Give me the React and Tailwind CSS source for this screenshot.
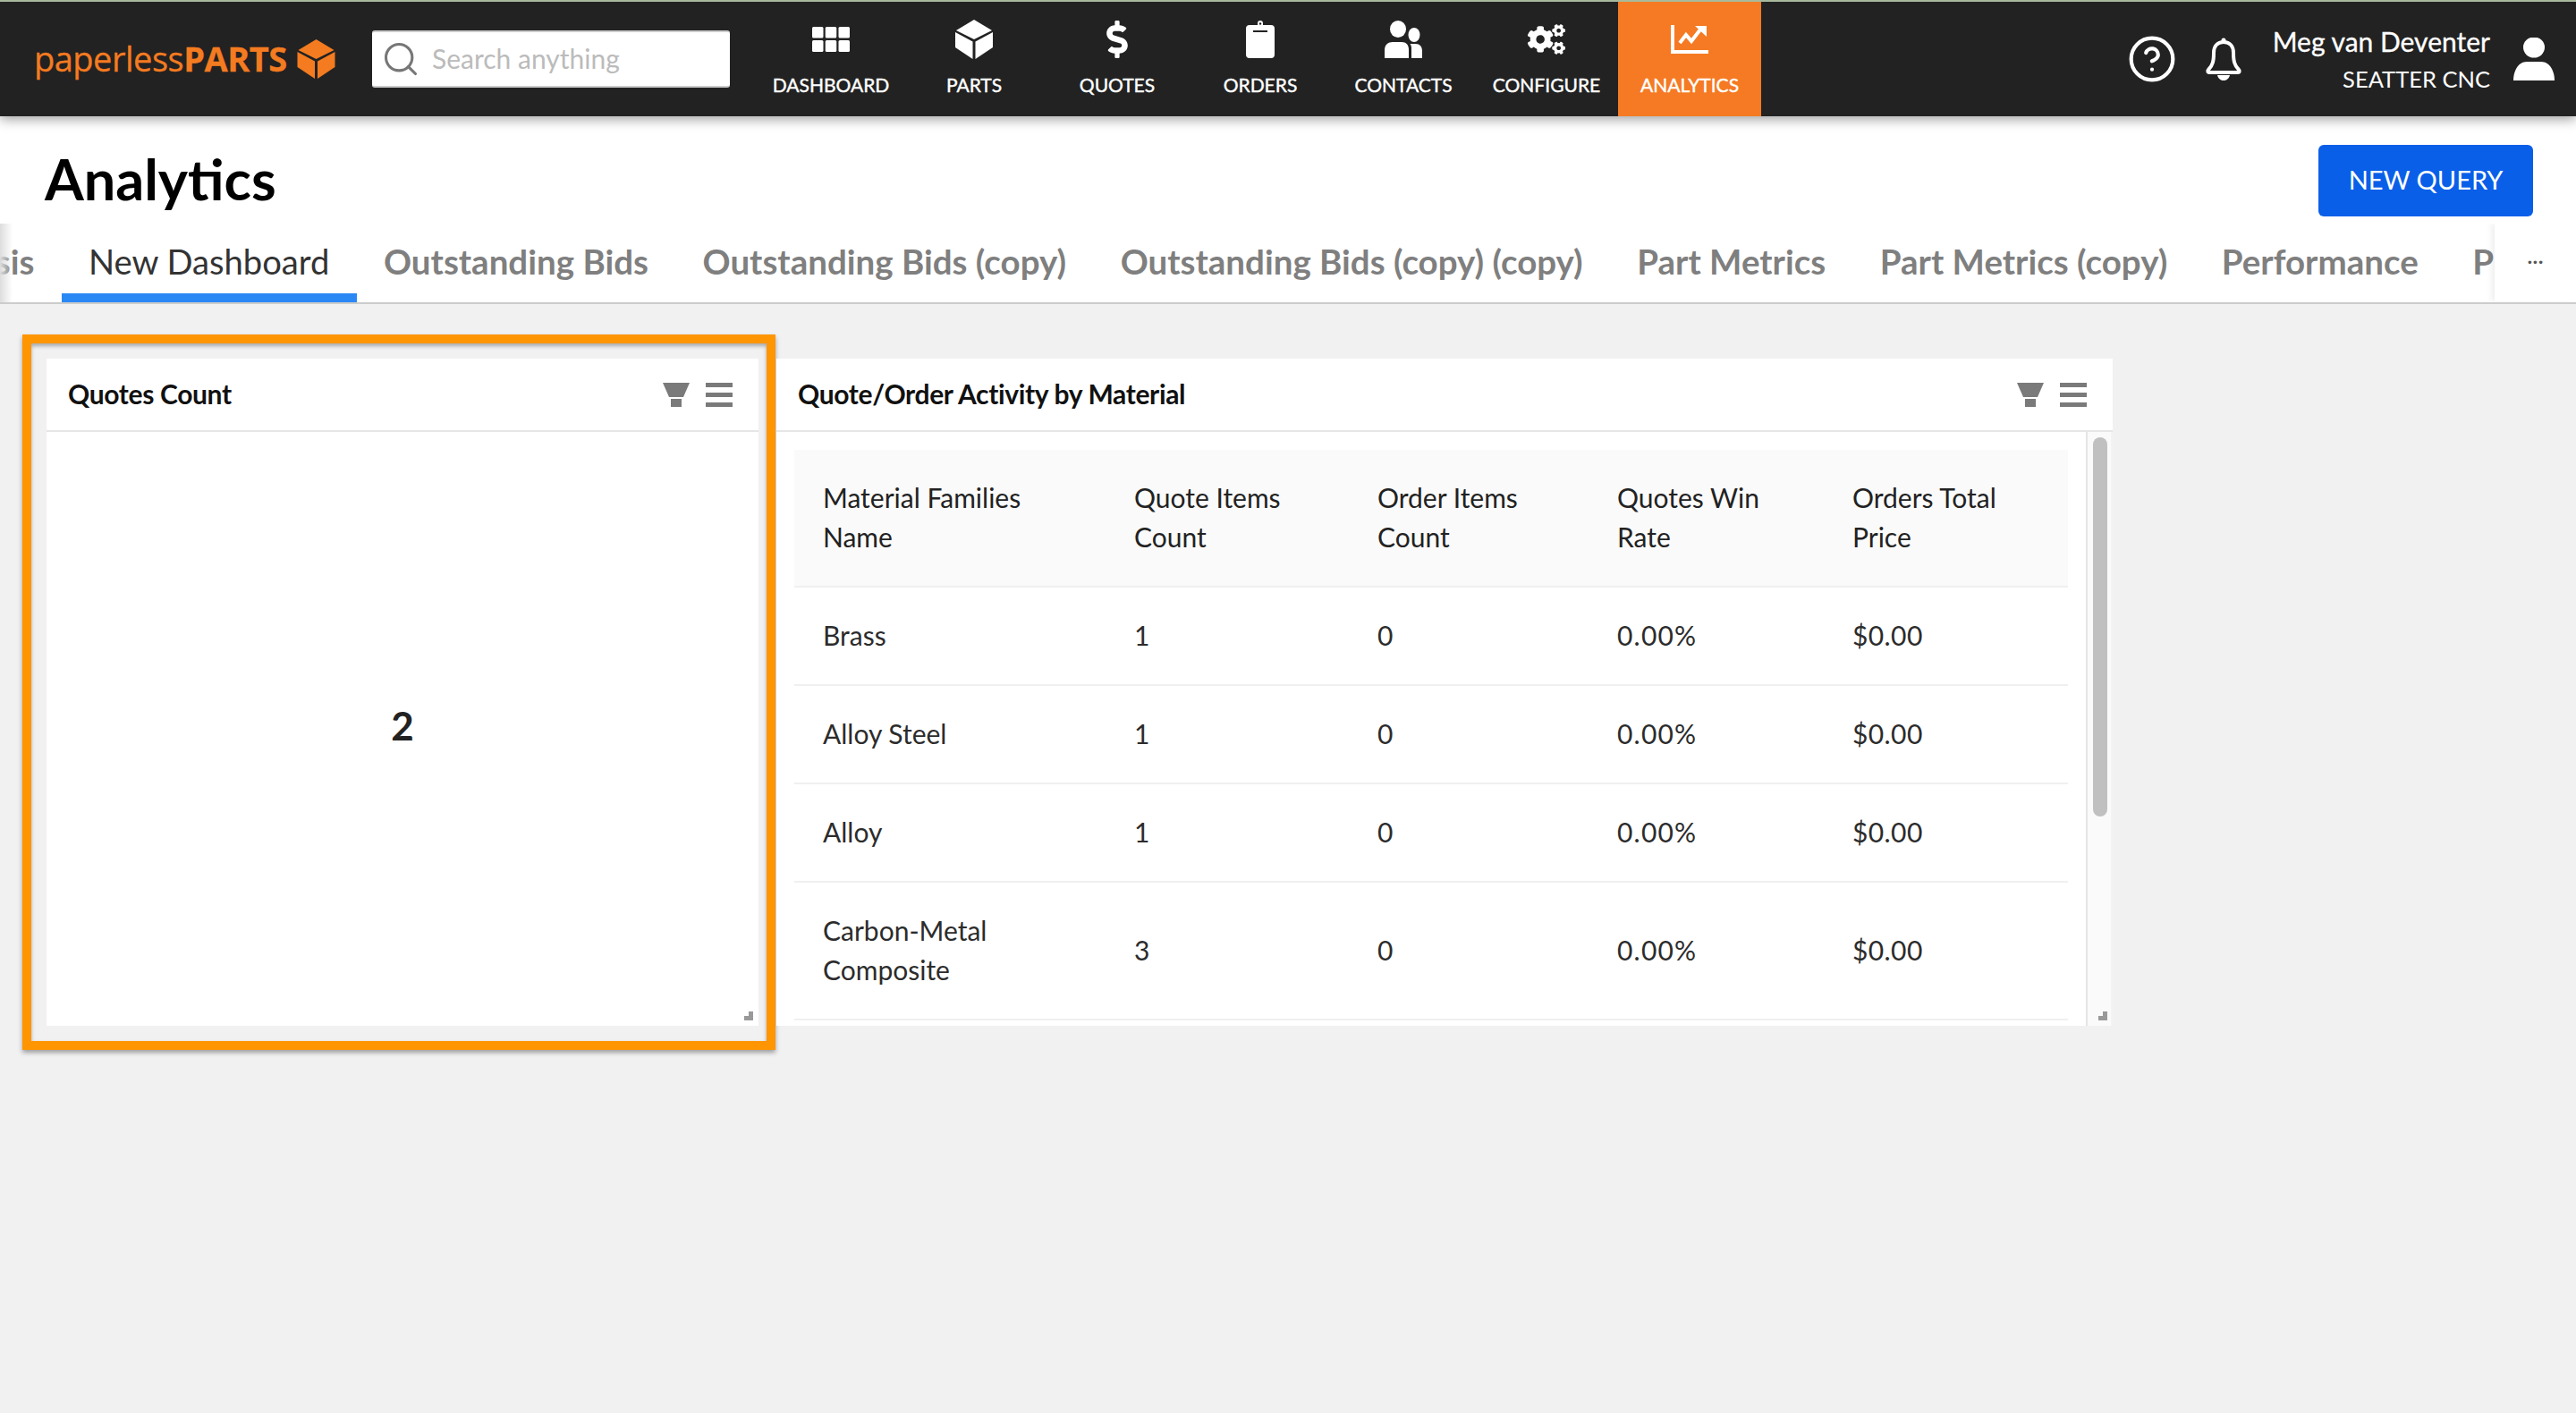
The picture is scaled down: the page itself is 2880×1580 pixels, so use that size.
import { CircleHelp, Search } from "lucide-react";
import { FaCogs, FaDollarSign } from "react-icons/fa";

const CubeIcon = ({ className }) => (
  <svg viewBox="0 0 42 44" className={className} fill="currentColor">
    <polygon points="21,0 41,12 21,22 1,12" />
    <polygon points="0,14 19.5,24.5 19.5,44 0,31" />
    <polygon points="22.5,24.5 42,14 42,31 22.5,44" />
  </svg>
);

const GridIcon = () => (
  <svg viewBox="0 0 42 28" className="h-[28px] w-[42px]" fill="currentColor">
    <rect x="0" y="0" width="12.5" height="12.5" rx="1.5" />
    <rect x="14.75" y="0" width="12.5" height="12.5" rx="1.5" />
    <rect x="29.5" y="0" width="12.5" height="12.5" rx="1.5" />
    <rect x="0" y="15" width="12.5" height="13" rx="1.5" />
    <rect x="14.75" y="15" width="12.5" height="13" rx="1.5" />
    <rect x="29.5" y="15" width="12.5" height="13" rx="1.5" />
  </svg>
);

const ClipboardIcon = () => (
  <svg viewBox="0 0 32 42" className="h-[42px] w-[32px]">
    <path
      fill="currentColor"
      d="M13 5V3a3 3 0 0 1 6 0v2h9a4 4 0 0 1 4 4v29a4 4 0 0 1-4 4H4a4 4 0 0 1-4-4V9a4 4 0 0 1 4-4z"
    />
    <rect x="8" y="11" width="16" height="2" fill="#222222" />
    <circle cx="16" cy="3.5" r="1.2" fill="#222222" />
  </svg>
);

const ContactsIcon = () => (
  <svg viewBox="0 0 42 42" className="h-[42px] w-[42px]" fill="currentColor">
    <ellipse cx="15" cy="9.5" rx="9" ry="9.5" />
    <ellipse cx="33" cy="16" rx="6.5" ry="8" />
    <path d="M0 42V33c0-6 4-9 9-9h10c5 0 8 3 8 9v9z" />
    <path d="M30 42V31c0-2-.5-4-1.500-5h6c5 0 7.500 3 7.500 8v8z" />
  </svg>
);

const ChartIcon = () => (
  <svg viewBox="0 0 42 32" className="h-[32px] w-[42px]" fill="none">
    <path d="M2 0v30h40" stroke="currentColor" strokeWidth="4" />
    <path d="M10 20l7-9 6 7 10-13" stroke="currentColor" strokeWidth="4" />
    <polygon points="27,1 40,1 40,13" fill="currentColor" />
  </svg>
);

const BellIcon = () => (
  <svg viewBox="0 0 42 48" className="h-[48px] w-[42px]" fill="none">
    <path
      d="M21 5c-7 0-11 5-11 12 0 9-1 14-6 19-1 1-1 3 1 3h32c2 0 2-2 1-3-5-5-6-10-6-19 0-7-4-12-11-12z"
      stroke="currentColor"
      strokeWidth="4"
      strokeLinejoin="round"
    />
    <circle cx="21" cy="3" r="2.500" fill="currentColor" />
    <path d="M14 42h14c-1 4-4 6-7 6s-6-2-7-6z" fill="currentColor" />
  </svg>
);

const UserIcon = () => (
  <svg viewBox="0 0 46 48" className="h-[48px] w-[46px]" fill="currentColor">
    <ellipse cx="23" cy="11" rx="12" ry="11.500" />
    <path d="M0 48c0-10 5-21 15-21h16c10 0 15 11 15 21z" />
  </svg>
);

const FunnelIcon = () => (
  <svg viewBox="0 0 30 27" className="h-[27px] w-[30px]" fill="#7a7a7a">
    <polygon points="0,0 30,0 23,16 7,16" />
    <rect x="9" y="18" width="12" height="9" />
  </svg>
);

const MenuIcon = () => (
  <div className="flex h-[27px] w-[30px] flex-col justify-between">
    <div className="h-[5px] bg-[#7a7a7a]" />
    <div className="h-[5px] bg-[#7a7a7a]" />
    <div className="h-[5px] bg-[#7a7a7a]" />
  </div>
);

const ResizeHandle = () => (
  <svg viewBox="0 0 10 10" className="absolute h-[10px] w-[10px]" fill="#999999">
    <polygon points="5,0 10,0 10,10 0,10 0,5 5,5" />
  </svg>
);

const navItems = [
  { label: "DASHBOARD", icon: <GridIcon /> },
  { label: "PARTS", icon: <CubeIcon className="h-[44px] w-[42px]" /> },
  { label: "QUOTES", icon: <FaDollarSign className="h-[42px] w-[26px]" /> },
  { label: "ORDERS", icon: <ClipboardIcon /> },
  { label: "CONTACTS", icon: <ContactsIcon /> },
  { label: "CONFIGURE", icon: <FaCogs className="h-[34px] w-[42px]" /> },
  { label: "ANALYTICS", icon: <ChartIcon />, active: true },
];

const tabs = [
  "New Dashboard",
  "Outstanding Bids",
  "Outstanding Bids (copy)",
  "Outstanding Bids (copy) (copy)",
  "Part Metrics",
  "Part Metrics (copy)",
  "Performance",
  "Profit",
];

const rows = [
  { name: ["Brass"], quotes: "1", orders: "0", rate: "0.00%", price: "$0.00" },
  { name: ["Alloy Steel"], quotes: "1", orders: "0", rate: "0.00%", price: "$0.00" },
  { name: ["Alloy"], quotes: "1", orders: "0", rate: "0.00%", price: "$0.00" },
  { name: ["Carbon-Metal", "Composite"], quotes: "3", orders: "0", rate: "0.00%", price: "$0.00" },
];

const CardHeader = ({ title }) => (
  <div className="flex h-[82px] shrink-0 items-center justify-between border-b-2 border-[#e6e6e6] pr-[29px] pl-[24px]">
    <span className="pb-[1px] text-[30px] font-bold tracking-[-0.35px] text-[#111111]">{title}</span>
    <div className="flex items-center gap-[18px]">
      <FunnelIcon />
      <MenuIcon />
    </div>
  </div>
);

const HeaderCell = ({ top, bottom }) => (
  <th className="pb-[2px] pl-[32px] text-left font-normal">
    {top}
    <br />
    {bottom}
  </th>
);

export default function App() {
  return (
    <div className="min-h-[1580px] w-full bg-[#f1f1f1] font-['Lato',sans-serif]">
      <header className="relative z-10 flex h-[130px] items-stretch border-t-2 border-[#a8ba9c] bg-[#222222] text-white shadow-[0_4px_12px_rgba(0,0,0,0.35)]">
        <div className="flex w-[416px] items-center pl-[38px] text-[#f47b20]">
          <span className="pb-[2px] font-['Open_Sans',sans-serif] text-[38px] leading-none font-medium tracking-[-0.5px] [-webkit-text-stroke:0.3px_#f47b20]">
            paperless<span className="font-bold">PARTS</span>
          </span>
          <CubeIcon className="ml-[11px] h-[44px] w-[43px]" />
        </div>
        <div className="flex w-[433px] items-center">
          <div className="flex h-[64px] w-[400px] items-center gap-[13px] rounded-[3px] border-y-2 border-[#cccccc] bg-white pl-[10px]">
            <Search className="h-[44px] w-[44px] text-[#777777]" strokeWidth={1.700} />
            <span className="pb-[1px] text-[30px] text-[#bbbbbb]">Search anything</span>
          </div>
        </div>
        {navItems.map((item) => (
          <div
            key={item.label}
            className={`flex w-[160px] flex-col items-center ${item.active ? "bg-[#f57a23]" : ""}`}
          >
            <div className="flex h-[84px] items-center">{item.icon}</div>
            <span className="text-[21px] leading-[18px] [-webkit-text-stroke:0.4px_white]">{item.label}</span>
          </div>
        ))}
        <div className="ml-auto flex items-center pr-[24px]">
          <CircleHelp className="h-[56px] w-[56px]" strokeWidth={1.800} />
          <div className="ml-[31px]">
            <BellIcon />
          </div>
          <div className="ml-[34px] flex flex-col items-end">
            <span className="text-[30px] leading-[44px] [-webkit-text-stroke:0.3px_white]">Meg van Deventer</span>
            <span className="text-[25.5px] leading-[40px]">SEATTER CNC</span>
          </div>
          <div className="ml-[26px]">
            <UserIcon />
          </div>
        </div>
      </header>

      <section className="bg-white">
        <div className="flex h-[120px] items-start justify-between pt-[32px] pr-[48px] pl-[50px]">
          <h1 className="text-[63px] leading-[76px] font-bold text-black">Analytics</h1>
          <button className="h-[80px] w-[240px] rounded-[6px] bg-[#0a5fe8] pb-[2px] text-[29px] text-white">
            NEW QUERY
          </button>
        </div>
        <div className="relative h-[90px] overflow-hidden border-b-2 border-[#cccccc]">
          <div className="flex h-[88px]">
            <div className="-ml-[133px] flex items-center px-[30.3px] pt-[8px] pb-[10px] text-[38.5px] font-bold whitespace-nowrap text-[#7f7f7f]">
              Analysis
            </div>
            {tabs.map((tab, i) => (
              <div
                key={tab}
                className={`flex items-center border-b-[10px] px-[30.3px] pt-[8px] whitespace-nowrap ${
                  i === 0
                    ? "border-[#2a88f5] text-[38.2px] text-[#333333]"
                    : "border-transparent text-[38.5px] font-bold text-[#7f7f7f]"
                }`}
              >
                {tab}
              </div>
            ))}
          </div>
          <div className="absolute top-0 left-0 h-full w-[14px] bg-gradient-to-r from-[#dddddd] to-transparent" />
          <div className="absolute top-0 right-0 flex h-[87px] w-[91px] items-center justify-center bg-white pb-[6px] text-[24px] text-[#555555] shadow-[-4px_0_6px_rgba(0,0,0,0.06)]">
            ···
          </div>
        </div>
      </section>

      <main className="flex gap-[20px] pt-[61px] pl-[52px]">
        <div className="relative flex h-[746px] w-[796px] flex-col bg-white">
          <CardHeader title="Quotes Count" />
          <div className="flex flex-1 items-center justify-center pb-[8px] text-[44px] font-bold text-[#222222]">
            2
          </div>
          <div className="absolute right-[6px] bottom-[6px] h-[10px] w-[10px]">
            <ResizeHandle />
          </div>
          <div className="absolute -top-[27px] -right-[19px] -bottom-[27px] -left-[27px] border-[10px] border-[#ff9500] shadow-[0_3px_5px_rgba(0,0,0,0.35),inset_0_3px_4px_rgba(0,0,0,0.3)]" />
        </div>

        <div className="relative flex h-[746px] w-[1494px] flex-col bg-white">
          <CardHeader title="Quote/Order Activity by Material" />
          <div className="flex min-h-0 flex-1">
            <div className="min-w-0 flex-1 overflow-hidden pt-[20px] pl-[20px]">
              <table className="w-[1424px] table-fixed border-collapse text-[30px] leading-[44px] text-[#2c2c2c]">
                <colgroup>
                  <col className="w-[348px]" />
                  <col className="w-[272px]" />
                  <col className="w-[268px]" />
                  <col className="w-[263px]" />
                  <col className="w-[273px]" />
                </colgroup>
                <thead>
                  <tr className="h-[153px] border-b-2 border-[#f0f0f0] bg-[#fafafa] text-[#222222]">
                    <HeaderCell top="Material Families" bottom="Name" />
                    <HeaderCell top="Quote Items" bottom="Count" />
                    <HeaderCell top="Order Items" bottom="Count" />
                    <HeaderCell top="Quotes Win" bottom="Rate" />
                    <HeaderCell top="Orders Total" bottom="Price" />
                  </tr>
                </thead>
                <tbody>
                  {rows.map((row) => (
                    <tr
                      key={row.name[0]}
                      className={`border-b-2 border-[#f0f0f0] ${row.name.length > 1 ? "h-[154px]" : "h-[110px]"}`}
                    >
                      <td className="pb-[2px] pl-[32px]">
                        {row.name.map((line) => (
                          <div key={line}>{line}</div>
                        ))}
                      </td>
                      <td className="pb-[2px] pl-[32px]">{row.quotes}</td>
                      <td className="pb-[2px] pl-[32px]">{row.orders}</td>
                      <td className="pb-[2px] pl-[32px] tracking-[1.2px]">{row.rate}</td>
                      <td className="pb-[2px] pl-[32px] tracking-[0.4px]">{row.price}</td>
                    </tr>
                  ))}
                </tbody>
              </table>
            </div>
            <div className="relative w-[30px] shrink-0 border-r-2 border-l-2 border-r-[#f3f3f3] border-l-[#e5e5e5] bg-[#fafafa] pt-[6px] pl-[6px]">
              <div className="h-[424px] w-[16px] rounded-full bg-[#c0c0c0]" />
              <div className="absolute right-[4px] bottom-[6px] h-[10px] w-[10px]">
                <ResizeHandle />
              </div>
            </div>
          </div>
        </div>
      </main>
    </div>
  );
}
